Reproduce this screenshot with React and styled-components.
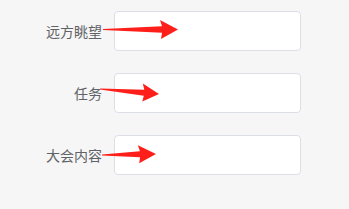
import React from "react";
import styled, { createGlobalStyle } from "styled-components";

const GlobalStyle = createGlobalStyle`
  html, body {
    margin: 0;
    padding: 0;
    background: #f6f6f6;
  }
  body {
    font-family: "Noto Sans CJK SC", "Noto Sans", sans-serif;
  }
`;

const rows = [
  { label: "远方眺望", arrow: { x1: 103, y1: 18.5, x2: 178, y2: 18.5, head: 18, half: 9.5, neck: 3.3 } },
  { label: "任务", arrow: { x1: 100, y1: 16, x2: 159, y2: 21, head: 17, half: 9, neck: 3 } },
  { label: "大会内容", arrow: { x1: 102, y1: 20, x2: 156, y2: 19, head: 18, half: 9, neck: 3 } },
];

const arrowPoints = ({ x1, y1, x2, y2, head, half, neck }) => {
  const dx = x2 - x1;
  const dy = y2 - y1;
  const len = Math.sqrt(dx * dx + dy * dy);
  const c = dx / len;
  const s = dy / len;
  const b = len - head;
  const local = [
    [0, -0.5],
    [b + 2, -neck],
    [b, -half],
    [len, 0],
    [b + 1, half],
    [b + 2, neck],
    [0, 0.5],
  ];
  return local
    .map(([u, v]) => `${(x1 + u * c - v * s).toFixed(2)},${(y1 + u * s + v * c).toFixed(2)}`)
    .join(" ");
};

const Arrow = ({ spec }) => (
  <ArrowSvg width="200" height="40" viewBox="0 0 200 40">
    <polygon points={arrowPoints(spec)} fill="#ff1f1a" />
  </ArrowSvg>
);

const App = () => {
  return (
    <>
      <GlobalStyle />
      <Form>
        {rows.map((r) => (
          <Row key={r.label}>
            <Label>{r.label}</Label>
            <Input />
            <Arrow spec={r.arrow} />
          </Row>
        ))}
      </Form>
    </>
  );
};

export default App;

const Form = styled.div`
  width: 349px;
  height: 209px;
  box-sizing: border-box;
  padding-top: 11px;
  display: flex;
  flex-direction: column;
  gap: 22px;
`;

const Row = styled.div`
  position: relative;
  display: flex;
  align-items: center;
  height: 40px;
`;

const Label = styled.label`
  width: 102px;
  padding-right: 12px;
  text-align: right;
  font-size: 14px;
  color: #606266;
  line-height: 40px;
`;

const Input = styled.div`
  width: 187px;
  height: 40px;
  box-sizing: border-box;
  background: #ffffff;
  border: 1px solid #dcdfe6;
  border-radius: 4px;
`;

const ArrowSvg = styled.svg`
  position: absolute;
  left: 0;
  top: 0;
  overflow: visible;
  pointer-events: none;
`;
